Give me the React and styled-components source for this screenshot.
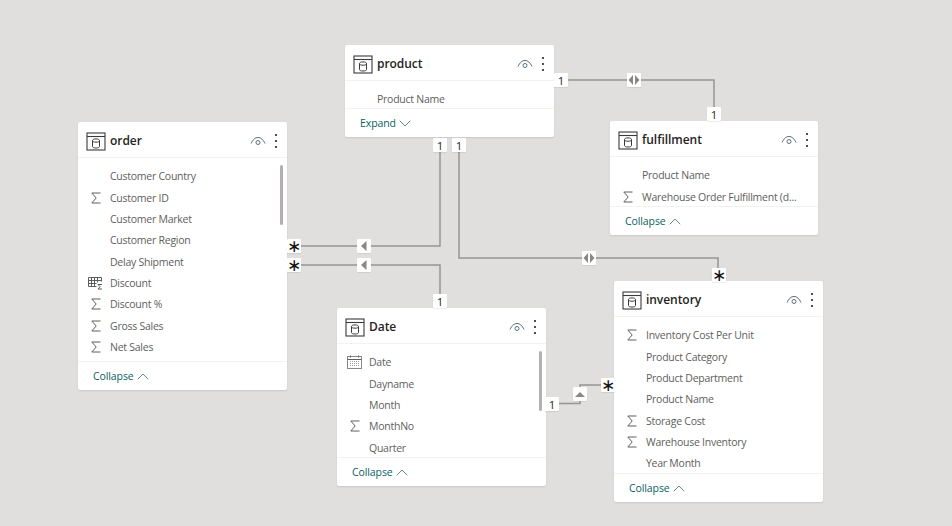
import React from "react";
import styled, { createGlobalStyle } from "styled-components";

const GlobalStyle = createGlobalStyle`
  html, body {
    margin: 0;
    padding: 0;
    background: #e1dfdd;
  }
`;

const Canvas = styled.div`
  position: relative;
  width: 952px;
  height: 526px;
  overflow: hidden;
  background: #e1dfdd;
  font-family: "Open Sans", "Noto Sans", sans-serif;
`;

const Wires = styled.svg`
  position: absolute;
  left: 0;
  top: 0;
`;

const Card = styled.div`
  position: absolute;
  left: ${(props) => props.$x}px;
  top: ${(props) => props.$y}px;
  width: ${(props) => props.$w}px;
  height: ${(props) => props.$h}px;
  display: flex;
  flex-direction: column;
  background: #ffffff;
  border-radius: 2px;
  box-shadow: 0 1px 2px rgba(0, 0, 0, 0.1);
`;

const Header = styled.div`
  height: 36px;
  flex: none;
  box-sizing: border-box;
  display: flex;
  align-items: center;
  padding: 3px 8px 0;
  border-bottom: 1px solid #f3f2f1;
`;

const Title = styled.div`
  flex: 1;
  margin: -2px 0 0 4px;
  font-size: 12px;
  font-weight: 600;
  letter-spacing: -0.05px;
  color: #252423;
`;

const Body = styled.div`
  position: relative;
  flex: 1;
  min-height: 0;
  padding-top: 7.6px;
  overflow: hidden;
`;

const Row = styled.div`
  height: 21.33px;
  display: flex;
  align-items: center;
  font-size: 10.5px;
  letter-spacing: -0.25px;
  color: #605e5c;
  white-space: nowrap;
`;

const IconSlot = styled.div`
  width: 32px;
  flex: none;
  display: flex;
  justify-content: center;
  padding-left: 3px;
  box-sizing: border-box;
`;

const Scrollbar = styled.div`
  position: absolute;
  right: 4px;
  top: 7px;
  width: 3.5px;
  height: 60px;
  border-radius: 2px;
  background: #b3b0ad;
`;

const Footer = styled.div`
  height: 29px;
  flex: none;
  box-sizing: border-box;
  display: flex;
  align-items: center;
  gap: 3px;
  padding-left: 15px;
  border-top: 1px solid #f3f2f1;
  font-size: 10.5px;
  letter-spacing: -0.1px;
  color: #0b5f63;
`;

const Badge = styled.div`
  position: absolute;
  left: ${(props) => props.$x}px;
  top: ${(props) => props.$y}px;
  width: 14px;
  height: 14px;
  display: flex;
  align-items: center;
  justify-content: center;
  background: #ffffff;
  border-radius: 1px;
  box-shadow: 0 1px 1px rgba(0, 0, 0, 0.08);
  font-family: "Open Sans", sans-serif;
  font-size: 11.5px;
  font-weight: 500;
  color: #252423;
`;

const Star = styled.span`
  font-family: "DejaVu Sans", sans-serif;
  font-size: 17px;
  line-height: 14px;
  font-weight: 400;
  color: #111111;
`;

const TableIcon = () => (
  <svg width="20" height="19" viewBox="0 0 20 19" fill="none" style={{ flex: "none" }}>
    <rect x="1" y="1" width="18" height="17" stroke="#3b3a39" strokeWidth="1.1" />
    <path d="M1 4.5h18" stroke="#3b3a39" strokeWidth="1.1" />
    <path
      d="M6.5 8.5c0-1 1.5-1.6 3.5-1.6s3.5.6 3.5 1.6v6c0 1-1.5 1.5-3.5 1.5s-3.5-.5-3.5-1.5zM6.5 8.7c0 1 1.5 1.5 3.5 1.5s3.5-.5 3.5-1.5"
      stroke="#3b3a39"
    />
  </svg>
);

const EyeIcon = () => (
  <svg width="16" height="10" viewBox="0 0 16 10" fill="none" style={{ flex: "none" }}>
    <path d="M1 7.5C2.8 3.6 5.2 1.5 8 1.5s5.2 2.1 7 6" stroke="#5c6f7c" />
    <circle cx="8" cy="6.5" r="2" stroke="#5c6f7c" />
  </svg>
);

const MoreIcon = () => (
  <svg width="4" height="16" viewBox="0 0 4 16" style={{ flex: "none", marginLeft: 8, marginRight: 1 }}>
    <circle cx="2" cy="2" r="1.1" fill="#252423" />
    <circle cx="2" cy="8" r="1.1" fill="#252423" />
    <circle cx="2" cy="14" r="1.1" fill="#252423" />
  </svg>
);

const SigmaIcon = () => (
  <svg width="10" height="12" viewBox="0 0 10 12" fill="none">
    <path d="M9.5 1H.8l4.4 5-4.4 5h8.7" stroke="#605e5c" />
  </svg>
);

const MeasureTableIcon = () => (
  <svg width="15" height="14" viewBox="0 0 15 14" fill="none">
    <path d="M.5 1.5h13M.5 4.5h13M.5 1.5v9h8M3.5 1.5v9M6.5 1.5v9M9.5 1.5v5M13.5 1.5v4M.5 7.5h8" stroke="#605e5c" />
    <path d="M14 8.5h-4l2 2.2-2 2.3h4" stroke="#605e5c" />
  </svg>
);

const CalendarIcon = () => (
  <svg width="15" height="14" viewBox="0 0 15 14" fill="none">
    <rect x=".5" y="1.5" width="14" height="12" stroke="#8a8886" />
    <path d="M.5 4.5h14" stroke="#605e5c" />
    <path d="M3.5 .5v2M11.5 .5v2" stroke="#605e5c" />
    <path d="M3 6.5h9M3 8.5h9M3 10.5h9" stroke="#a19f9d" strokeDasharray="1 1" />
  </svg>
);

const Chevron = ({ up }) => (
  <svg width="12" height="7" viewBox="0 0 12 7" fill="none">
    <path d={up ? "M.8 6.2 6 1l5.2 5.2" : "M.8 .8 6 6l5.2-5.2"} stroke="#5f8a8e" />
  </svg>
);

const fieldIcons = {
  sigma: <SigmaIcon />,
  measures: <MeasureTableIcon />,
  calendar: <CalendarIcon />,
};

const tables = [
  {
    name: "order",
    x: 78,
    y: 122,
    w: 209,
    h: 268,
    scroll: true,
    fields: [
      ["Customer Country"],
      ["Customer ID", "sigma"],
      ["Customer Market"],
      ["Customer Region"],
      ["Delay Shipment"],
      ["Discount", "measures"],
      ["Discount %", "sigma"],
      ["Gross Sales", "sigma"],
      ["Net Sales", "sigma"],
    ],
  },
  {
    name: "product",
    x: 345,
    y: 45,
    w: 209,
    h: 92,
    footer: "Expand",
    fields: [["Product Name"]],
  },
  {
    name: "fulfillment",
    x: 610,
    y: 121,
    w: 208,
    h: 114,
    fields: [["Product Name"], ["Warehouse Order Fulfillment (d...", "sigma"]],
  },
  {
    name: "Date",
    x: 337,
    y: 308,
    w: 209,
    h: 178,
    scroll: true,
    fields: [["Date", "calendar"], ["Dayname"], ["Month"], ["MonthNo", "sigma"], ["Quarter"]],
  },
  {
    name: "inventory",
    x: 614,
    y: 281,
    w: 209,
    h: 221,
    fields: [
      ["Inventory Cost Per Unit", "sigma"],
      ["Product Category"],
      ["Product Department"],
      ["Product Name"],
      ["Storage Cost", "sigma"],
      ["Warehouse Inventory", "sigma"],
      ["Year Month"],
    ],
  },
];

const wires = [
  "M553 80H714V108",
  "M440 151V246H300",
  "M440 294V265H300",
  "M459 151V258H718V268",
  "M559 403.5H580V385H602",
];

const labels = [
  [554, 73, "1"],
  [707, 107, "1"],
  [433, 138, "1"],
  [452, 138, "1"],
  [433, 294, "1"],
  [545, 397, "1"],
  [287, 239, "*"],
  [287, 258, "*"],
  [712, 268, "*"],
  [601, 378, "*"],
];

const arrows = [
  [627, 73, "both"],
  [582, 251, "both"],
  [357, 239, "left"],
  [357, 258, "left"],
  [573, 387, "up"],
];

function FilterArrow({ kind }) {
  return (
    <svg width="14" height="14" viewBox="0 0 14 14">
      {kind === "both" && (
        <>
          <path d="M6 2v10L1.5 7z" fill="#8a8886" />
          <path d="M8 2v10l4.5-5z" fill="#8a8886" />
        </>
      )}
      {kind === "left" && <path d="M9.5 2v10L4 7z" fill="#8a8886" />}
      {kind === "up" && <path d="M2 10h10L7 5z" fill="#8a8886" />}
    </svg>
  );
}

function TableCard({ table }) {
  const footer = table.footer || "Collapse";
  return (
    <Card $x={table.x} $y={table.y} $w={table.w} $h={table.h}>
      <Header>
        <TableIcon />
        <Title>{table.name}</Title>
        <EyeIcon />
        <MoreIcon />
      </Header>
      <Body>
        {table.fields.map(([label, icon]) => (
          <Row key={label}>
            <IconSlot>{icon && fieldIcons[icon]}</IconSlot>
            {label}
          </Row>
        ))}
        {table.scroll && <Scrollbar />}
      </Body>
      <Footer>
        {footer}
        <Chevron up={footer === "Collapse"} />
      </Footer>
    </Card>
  );
}

export default function App() {
  return (
    <Canvas>
      <GlobalStyle />
      <Wires width="952" height="526" fill="none">
        {wires.map((d) => (
          <path key={d} d={d} stroke="#979593" strokeWidth="1.5" />
        ))}
      </Wires>
      {tables.map((table) => (
        <TableCard key={table.name} table={table} />
      ))}
      {labels.map(([x, y, text]) => (
        <Badge key={`${x}-${y}`} $x={x} $y={y}>
          {text === "*" ? <Star>∗</Star> : text}
        </Badge>
      ))}
      {arrows.map(([x, y, kind]) => (
        <Badge key={`${x}-${y}`} $x={x} $y={y}>
          <FilterArrow kind={kind} />
        </Badge>
      ))}
    </Canvas>
  );
}
